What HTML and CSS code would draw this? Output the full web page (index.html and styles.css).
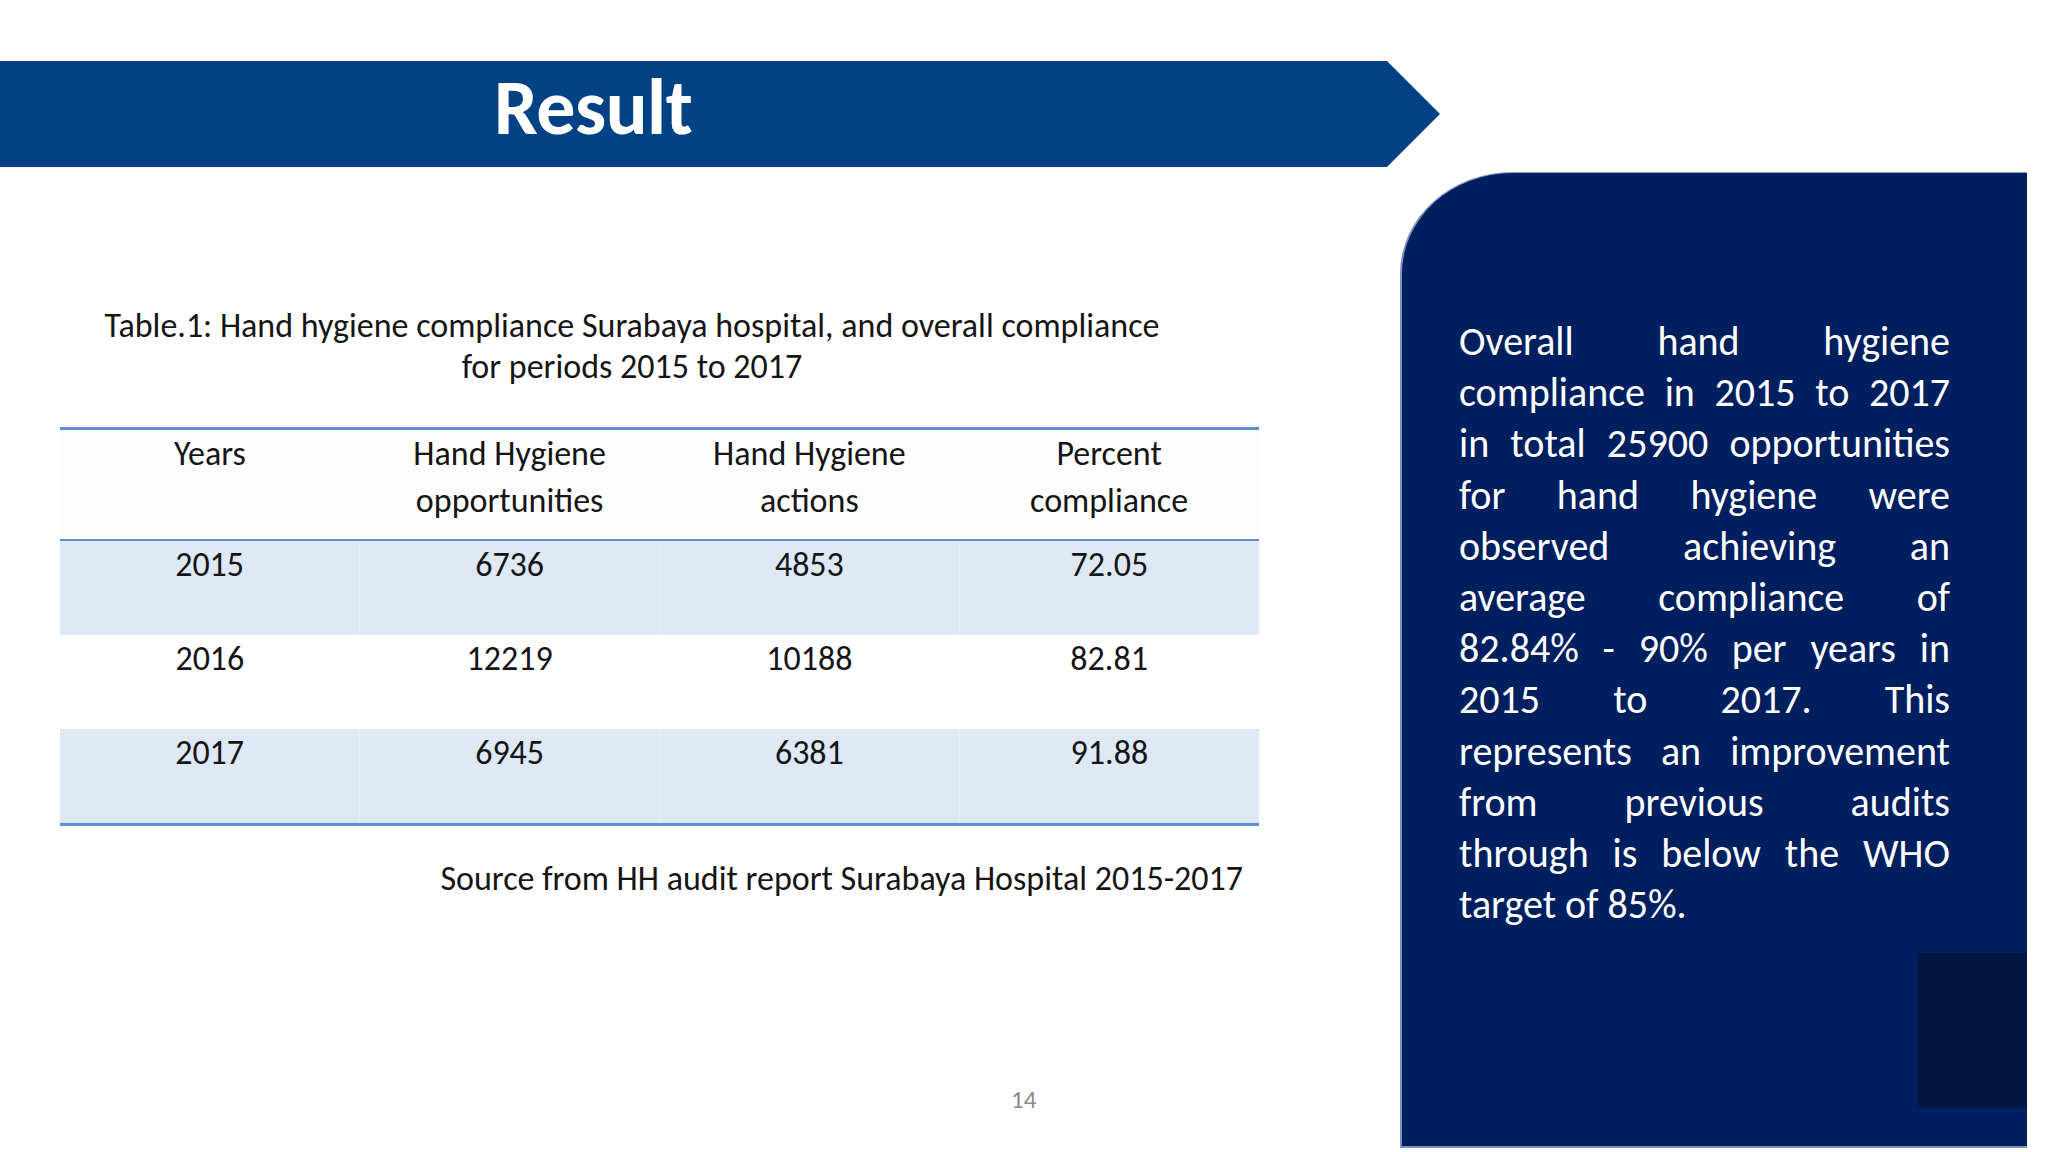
FILE: index.html
```html
<!DOCTYPE html>
<html>
<head>
<meta charset="utf-8">
<link rel="stylesheet" href="styles.css">
</head>
<body>
<div class="slide">
  <header class="banner">
    <h1 class="title">Result</h1>
  </header>
  <div class="main">
    <section class="left">
      <p class="caption">Table.1: Hand hygiene compliance Surabaya hospital, and overall compliance<br>for periods 2015 to 2017</p>
      <table class="data">
        <thead>
          <tr>
            <th>Years</th>
            <th>Hand Hygiene<br>opportunities</th>
            <th>Hand Hygiene<br>actions</th>
            <th>Percent<br>compliance</th>
          </tr>
        </thead>
        <tbody>
          <tr class="shaded"><td>2015</td><td>6736</td><td>4853</td><td>72.05</td></tr>
          <tr><td>2016</td><td>12219</td><td>10188</td><td>82.81</td></tr>
          <tr class="shaded"><td>2017</td><td>6945</td><td>6381</td><td>91.88</td></tr>
        </tbody>
      </table>
      <p class="source">Source from HH audit report Surabaya Hospital 2015-2017</p>
      <p class="pageno">14</p>
    </section>
    <aside class="panel">
      <p class="summary">
        <span class="ln">Overall hand hygiene</span>
        <span class="ln">compliance in 2015 to 2017</span>
        <span class="ln">in total 25900 opportunities</span>
        <span class="ln">for hand hygiene were</span>
        <span class="ln">observed achieving an</span>
        <span class="ln">average compliance of</span>
        <span class="ln">82.84% - 90% per years in</span>
        <span class="ln">2015 to 2017. This</span>
        <span class="ln">represents an improvement</span>
        <span class="ln">from previous audits</span>
        <span class="ln">through is below the WHO</span>
        <span class="ln last">target of 85%.</span>
      </p>
      <div class="corner-block"></div>
    </aside>
  </div>
</div>
</body>
</html>
```
FILE: styles.css
```css
html, body {
  margin: 0;
  padding: 0;
  background: #ffffff;
}
body {
  font-family: "Carlito", "Lato", "Liberation Sans", sans-serif;
  color: #111;
}
.slide {
  width: 2048px;
  height: 1152px;
  overflow: hidden;
  padding-top: 61px;
  box-sizing: border-box;
}
.banner {
  width: 1440px;
  height: 106px;
  background: #024284;
  clip-path: polygon(0 0, 1387px 0, 1440px 53px, 1387px 106px, 0 106px);
  display: flex;
  align-items: center;
  padding-left: 494px;
  padding-bottom: 13px;
  box-sizing: border-box;
}
.title {
  margin: 0;
  color: #fff;
  font-weight: 700;
  font-size: 78px;
  line-height: 1;
  letter-spacing: -0.5px;
}
.main {
  display: flex;
  height: 985px;
}
.left {
  width: 1400px;
  padding-left: 60px;
  box-sizing: border-box;
}
.caption {
  margin: 138px 0 0 2px;
  width: 1140px;
  text-align: center;
  font-size: 34px;
  line-height: 41px;
  color: #151515;
}
.data {
  margin-top: 40px;
  width: 1199px;
  border-collapse: collapse;
  table-layout: fixed;
  font-size: 34px;
  color: #151515;
}
.data th, .data td {
  font-weight: 400;
  text-align: center;
  vertical-align: top;
  line-height: 47px;
  padding: 0;
}
.data th {
  height: 109px;
  background: #fdfdfd;
  border-top: 3px solid #5b8fcd;
  border-bottom: 2px solid #5b8fcd;
}
.data td {
  height: 94px;
}
.data tr.shaded td {
  background: #dee9f5;
}
.data tr.shaded td + td {
  border-left: 1px solid #e6eef8;
}
.data tbody tr:last-child td {
  border-bottom: 3px solid #5b8fcd;
}
.source {
  margin: 32px 0 0 0;
  width: 1183px;
  text-align: right;
  font-size: 34px;
  line-height: 41px;
  color: #151515;
}
.pageno {
  margin: 186px 0 0 951px;
  font-size: 25px;
  line-height: 30px;
  color: #8a8a8a;
}
.panel {
  position: relative;
  margin-top: 5px;
  width: 627px;
  height: 976px;
  background: #001f5f;
  border-top-left-radius: 112px 102px;
  border-top: 1px solid #8ea3cc;
  border-left: 2px solid #7a90bf;
  border-bottom: 2px solid #7a90bf;
  box-sizing: border-box;
  padding: 143px 77px 0 57px;
}
.summary {
  margin: 0;
  color: #fff;
  font-size: 40px;
  line-height: 51.2px;
}
.ln {
  display: block;
  white-space: nowrap;
  text-align: justify;
  text-align-last: justify;
}
.ln.last {
  text-align: left;
  text-align-last: left;
}
.corner-block {
  position: absolute;
  right: 0;
  top: 780px;
  width: 109px;
  height: 154px;
  background: #011640;
}
```
